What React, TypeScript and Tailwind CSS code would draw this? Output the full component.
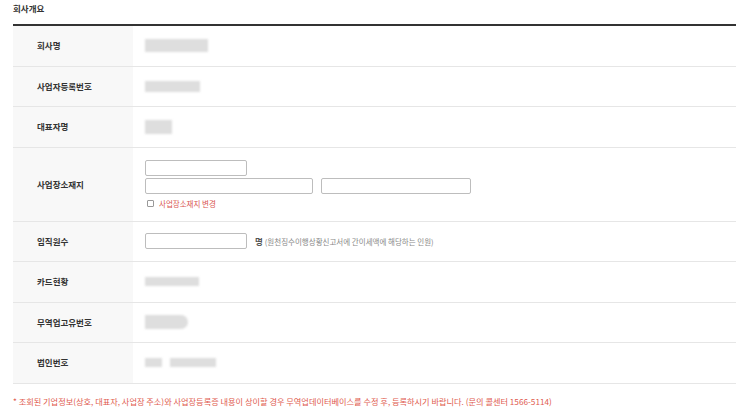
import React from 'react';

const FONT = { fontFamily: '"Noto Sans CJK KR", "Noto Sans", sans-serif' };

// blurred placeholder for masked values
function Masked({ className }: { className: string }) {
  return <div className={`bg-[#dedede] blur-[1px] ${className}`} />;
}

function Row({
  label,
  children,
  tall,
}: {
  label: string;
  children: React.ReactNode;
  tall?: boolean;
}) {
  return (
    <div className={`flex border-b border-[#e6e6e6] ${tall ? 'h-[74px]' : 'h-[40.5px]'}`}>
      <div className="w-[120px] shrink-0 bg-[#f8f8f8] flex items-center pl-[24px] text-[8.5px] font-bold text-[#333]">
        {label}
      </div>
      <div className="flex-1 flex items-center pl-[12px]">{children}</div>
    </div>
  );
}

export default function App() {
  return (
    <div className="w-[743px] h-[420px] bg-white pl-[13px] pr-[7px]" style={FONT}>
      <div className="h-[16px] mb-[8px] flex items-center text-[8.5px] font-bold text-[#333]">회사개요</div>

      <div className="border-t-2 border-[#333]">
        <Row label="회사명">
          <Masked className="w-[63px] h-[13px]" />
        </Row>
        <Row label="사업자등록번호">
          <Masked className="w-[55px] h-[11px]" />
        </Row>
        <Row label="대표자명">
          <Masked className="w-[27px] h-[14px]" />
        </Row>
        <Row label="사업장소재지" tall>
          <div className="flex flex-col gap-[2px] pt-[1px]">
            <input className="w-[102px] h-[16px] border border-[#bdbdbd] rounded-[2px] bg-white" />
            <div className="flex gap-[8px]">
              <input className="w-[168px] h-[16px] border border-[#bdbdbd] rounded-[2px] bg-white" />
              <input className="w-[150px] h-[16px] border border-[#bdbdbd] rounded-[2px] bg-white" />
            </div>
            <label className="flex items-center gap-[5px] mt-[2px] pl-[2px]">
              <span className="w-[7px] h-[7px] border border-[#999] rounded-[1px] bg-white" />
              <span className="text-[7.5px] text-[#d9534f]">사업장소재지 변경</span>
            </label>
          </div>
        </Row>
        <Row label="임직원수">
          <div className="flex items-center">
            <input className="w-[102px] h-[16px] border border-[#bdbdbd] rounded-[2px] bg-white" />
            <span className="ml-[8px] text-[8.5px] font-bold text-[#555]">명</span>
            <span className="ml-[2px] text-[7.5px] text-[#888]">(원천징수이행상황신고서에 간이세액에 해당하는 인원)</span>
          </div>
        </Row>
        <Row label="카드현황">
          <Masked className="w-[54px] h-[9px]" />
        </Row>
        <Row label="무역업고유번호">
          <Masked className="w-[43px] h-[14px] rounded-r-full" />
        </Row>
        <Row label="법인번호">
          <div className="flex gap-[8px]">
            <Masked className="w-[17px] h-[9px]" />
            <Masked className="w-[46px] h-[9px]" />
          </div>
        </Row>
      </div>

      <p className="mt-[11px] text-[8.2px] text-[#e05a4e]">
        * 조회된 기업정보(상호, 대표자, 사업장 주소)와 사업장등록증 내용이 상이할 경우 무역업데이터베이스를 수정 후, 등록하시기 바랍니다. (문의 콜센터 1566-5114)
      </p>
    </div>
  );
}
